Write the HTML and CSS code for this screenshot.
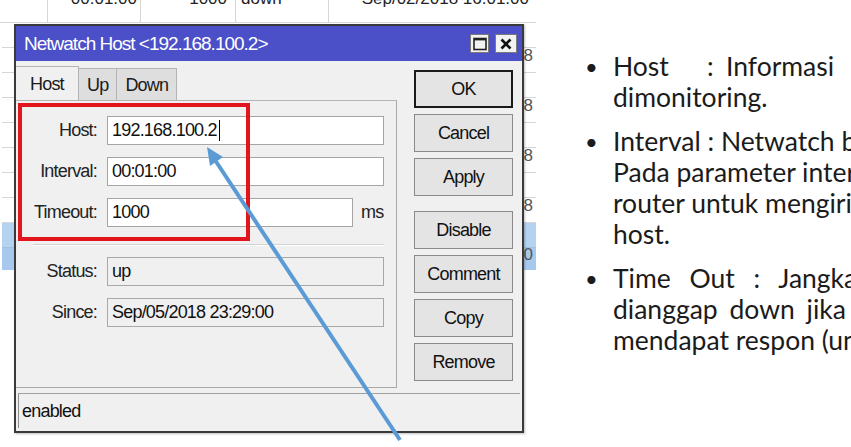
FILE: index.html
```html
<!DOCTYPE html>
<html>
<head>
<meta charset="utf-8">
<link rel="stylesheet" href="styles.css">
</head>
<body>
<div class="page">
  <div class="desk">
    <div class="list">
      <div class="row head">
        <div class="cell c1"></div>
        <div class="cell c2"><span>00:01:00</span></div>
        <div class="cell c3"><span>1000</span></div>
        <div class="cell c4"><span>down</span></div>
        <div class="cell c5"><span>Sep/02/2018 16:01:00</span></div>
      </div>
      <div class="row"></div>
      <div class="row"><span class="tail">8</span></div>
      <div class="row"></div>
      <div class="row"><span class="tail">8</span></div>
      <div class="row"></div>
      <div class="row"><span class="tail">8</span></div>
      <div class="row"></div>
      <div class="row"><span class="tail">8</span></div>
      <div class="row sel"></div>
      <div class="row sel sel2"><span class="tail">0</span></div>
    </div>

    <div class="dialog">
      <div class="titlebar">
        <span class="title">Netwatch Host &lt;192.168.100.2&gt;</span>
        <div class="tbtns">
          <span class="tbtn restore"><svg width="14" height="14" viewBox="0 0 14 14"><rect x="1" y="1.5" width="12" height="11" fill="none" stroke="#222" stroke-width="1.6"/><line x1="1" y1="2.2" x2="13" y2="2.2" stroke="#222" stroke-width="2.4"/></svg></span>
          <span class="tbtn close"><svg width="14" height="14" viewBox="0 0 14 14"><path d="M2.5 2.5 L11.5 11.5 M11.5 2.5 L2.5 11.5" stroke="#111" stroke-width="2.6"/></svg></span>
        </div>
      </div>
      <div class="content">
        <div class="main">
          <div class="tabs">
            <span class="tab active">Host</span>
            <span class="tab">Up</span>
            <span class="tab">Down</span>
          </div>
          <div class="panel">
            <div class="field">
              <label>Host:</label>
              <div class="input">192.168.100.2<span class="caret"></span></div>
            </div>
            <div class="field">
              <label>Interval:</label>
              <div class="input">00:01:00</div>
            </div>
            <div class="field">
              <label>Timeout:</label>
              <div class="input short">1000</div>
              <span class="unit">ms</span>
            </div>
            <div class="sep"></div>
            <div class="field">
              <label>Status:</label>
              <div class="input ro">up</div>
            </div>
            <div class="field">
              <label>Since:</label>
              <div class="input ro">Sep/05/2018 23:29:00</div>
            </div>
          </div>
        </div>
        <div class="buttons">
          <span class="btn default">OK</span>
          <span class="btn">Cancel</span>
          <span class="btn">Apply</span>
          <span class="btn gap">Disable</span>
          <span class="btn">Comment</span>
          <span class="btn">Copy</span>
          <span class="btn">Remove</span>
        </div>
      </div>
      <div class="statusbar">enabled</div>
    </div>

    <div class="highlight"></div>
  </div>

  <div class="slide">
    <ul>
      <li><span class="bullet">•</span><div class="txt">
        <div class="line first"><span class="w-host">Host</span><span class="w-colon">:</span>Informasi host yang akan</div>
        <div class="line">dimonitoring.</div>
      </div></li>
      <li><span class="bullet">•</span><div class="txt">
        <div class="line">Interval : Netwatch berjalan secara berkala.</div>
        <div class="line">Pada parameter interval ditentukan waktu</div>
        <div class="line">router untuk mengirimkan ping ke</div>
        <div class="line">host.</div>
      </div></li>
      <li><span class="bullet">•</span><div class="txt">
        <div class="line wide">Time Out : Jangka waktu host</div>
        <div class="line mid">dianggap down jika tidak</div>
        <div class="line">mendapat respon (unreachable).</div>
      </div></li>
    </ul>
  </div>

  <svg class="arrow" width="851" height="447" viewBox="0 0 851 447">
    <line x1="400" y1="440" x2="215" y2="160" stroke="#5b9bd5" stroke-width="4"/>
    <polygon points="207,147 210,166 223,157" fill="#5b9bd5"/>
  </svg>
</div>
</body>
</html>
```

FILE: styles.css
```css
* { box-sizing: border-box; }

body {
  margin: 0;
  background: #fff;
}

.page {
  position: relative;
  width: 851px;
  height: 447px;
  overflow: hidden;
  display: flex;
  background: #fff;
  font-family: "Liberation Sans", Arial, sans-serif;
}

/* ---------- background list ---------- */
.desk {
  position: relative;
  width: 536px;
  flex: none;
  overflow: hidden;
}

.list {
  display: flex;
  flex-direction: column;
  font-size: 17px;
  color: #222;
}

.row {
  height: 25px;
  margin-left: 2px;
  border-bottom: 1px solid #d6d6d6;
  display: flex;
  justify-content: flex-end;
  align-items: center;
}

.row.head {
  height: 23px;
  margin-left: 0;
  justify-content: flex-start;
  align-items: stretch;
}

.cell {
  border-right: 1px solid #d6d6d6;
  display: flex;
  justify-content: flex-end;
  line-height: 18px;
  overflow: hidden;
}

.cell span { margin-top: -10px; }

.c1 { width: 48px; }
.c2 { width: 93px; padding-right: 3px; }
.c3 { width: 95px; padding-right: 8px; }
.c4 { width: 93px; justify-content: flex-start; padding-left: 5px; }
.c5 { flex: 1; border-right: none; padding-right: 7px; }

.tail {
  padding-right: 3px;
  margin-top: -8px;
  color: #555;
}

.row.sel {
  background: #b5d2f1;
  border-bottom-color: #9fc1e6;
}

.row.sel2 {
  height: 22px;
  background: #a8c9ee;
  border-bottom: none;
}

/* ---------- dialog window ---------- */
.dialog {
  position: absolute;
  left: 14px;
  top: 24px;
  width: 510px;
  height: 409px;
  border: 2px solid #3a3a3a;
  background: #f0f0f0;
  display: flex;
  flex-direction: column;
  box-shadow: 1px 1px 2px rgba(0,0,0,0.25);
  font-size: 18px;
  letter-spacing: -0.8px;
  color: #1a1a1a;
}

.titlebar {
  height: 35px;
  flex: none;
  background: #4b50c8;
  display: flex;
  align-items: center;
  justify-content: space-between;
  padding: 0 5px 0 8px;
}

.title {
  color: #fff;
  font-size: 19px;
  letter-spacing: -1px;
}

.tbtns {
  display: flex;
  gap: 6px;
  align-items: center;
}

.tbtn {
  height: 19px;
  background: #f2f2f2;
  border: 1px solid #7a7a7a;
  display: flex;
  align-items: center;
  justify-content: center;
}

.tbtn.restore { width: 19px; }
.tbtn.close { width: 22px; }

.content {
  display: flex;
  height: 328px;
  flex: none;
}

.main {
  width: 381px;
  display: flex;
  flex-direction: column;
}

.tabs {
  display: flex;
  align-items: flex-end;
  height: 40px;
  padding-top: 5px;
}

.tab {
  height: 33px;
  padding: 0 8px;
  background: #dedede;
  border: 1px solid #b4b4b4;
  border-bottom: none;
  border-left: none;
  display: flex;
  align-items: center;
}

.tab.active {
  height: 35px;
  width: 63px;
  padding-left: 14px;
  background: #f0f0f0;
}

.panel {
  height: 288px;
  border-top: 1px solid #b4b4b4;
  border-right: 1px solid #a8a8a8;
  border-bottom: 1px solid #a8a8a8;
  margin-top: -1px;
  padding: 15px 12px 0 0;
  display: flex;
  flex-direction: column;
  gap: 12px;
}

.field {
  display: flex;
  align-items: center;
  height: 29px;
}

.field label {
  width: 81px;
  margin-right: 10px;
  text-align: right;
  color: #222;
}

.input {
  flex: 1;
  height: 29px;
  background: #fff;
  border: 1px solid #a5a5a5;
  color: #111;
  padding-left: 4px;
  display: flex;
  align-items: center;
}

.input.short {
  flex: none;
  width: 246px;
}

.input.ro {
  background: #f0f0f0;
  border-color: #a8a8a8;
}

.caret {
  display: inline-block;
  width: 1px;
  height: 21px;
  margin-left: 2px;
  background: #000;
}

.unit {
  margin-left: 8px;
  color: #222;
}

.sep {
  height: 2px;
  margin: 5px 0 -1px 17px;
  border-top: 1px solid #d2d2d2;
  border-bottom: 1px solid #fff;
}

.buttons {
  width: 99px;
  margin-left: 17px;
  padding-top: 9px;
  display: flex;
  flex-direction: column;
  gap: 6px;
}

.btn {
  height: 38px;
  background: #e4e4e4;
  border: 1px solid #8a8a8a;
  color: #111;
  display: flex;
  align-items: center;
  justify-content: center;
}

.btn.default {
  border: 2px solid #1a1a1a;
}

.btn.gap { margin-top: 9px; }

.statusbar {
  margin: 4px 2px 0 2px;
  height: 35px;
  border-top: 1px solid #a0a0a0;
  border-left: 1px solid #8c8c8c;
  color: #111;
  padding-left: 3px;
  display: flex;
  align-items: center;
}

/* ---------- annotations ---------- */
.highlight {
  position: absolute;
  left: 18px;
  top: 103px;
  width: 232px;
  height: 138px;
  border: 4px solid #e2141c;
}

.arrow {
  position: absolute;
  left: 0;
  top: 0;
  pointer-events: none;
}

/* ---------- slide text ---------- */
.slide {
  flex: 1;
  overflow: hidden;
  font-family: Lato, "Open Sans", sans-serif;
  font-size: 26.5px;
  color: #1b1b1b;
  white-space: nowrap;
}

.slide ul {
  list-style: none;
  margin: 0;
  padding: 51px 0 0 49px;
}

.slide li {
  display: flex;
}

.slide li + li { margin-top: 13px; }

.bullet {
  width: 28px;
  line-height: 31px;
  font-size: 22px;
  flex: none;
}

.line { line-height: 31px; }

.w-host { display: inline-block; width: 94px; }
.w-colon { display: inline-block; width: 19px; }

.line.first { word-spacing: 30px; }
.line.wide { word-spacing: 12px; }
.line.mid { word-spacing: 5px; }
```
